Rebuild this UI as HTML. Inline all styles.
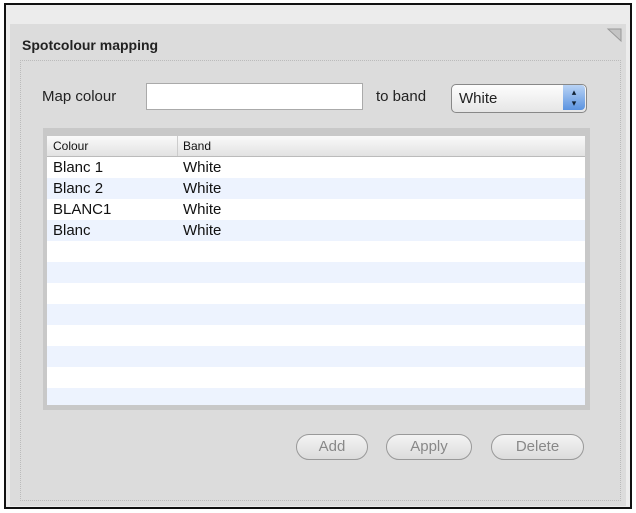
<!DOCTYPE html>
<html><head><style>
body{margin:0;width:636px;height:513px;background:#fff;font-family:"Liberation Sans",sans-serif;position:relative;overflow:hidden}
.a{position:absolute}
#outer{left:4px;top:3px;width:624px;height:502px;border:2px solid #111;background:#ececec}
#panel{left:10px;top:24px;width:616px;height:482px;background:#dcdcdc}
#dot{left:20px;top:60px;width:599px;height:439px;border:1px dotted #bbb}
.t{font-size:15px;color:#222}
.btn{height:24px;border:1px solid #999;border-radius:13px;background:linear-gradient(#f4f4f4,#dcdcdc);color:#888;font-size:15px;text-align:center;line-height:24px}
.row{position:absolute;left:0;width:538px;height:21px;font-size:15px;color:#111;line-height:21px}
</style></head><body>
<div class="a" id="outer"></div>
<div class="a" id="panel"></div>
<svg class="a" style="left:606px;top:26px" width="18" height="18"><path d="M2 3 L15 3 L15 15 Z" fill="#c4c4c4" stroke="#999" stroke-width="1"/></svg>
<div class="a" id="dot"></div>
<div class="a t" style="left:22px;top:37px;font-weight:bold;font-size:14px">Spotcolour mapping</div>
<div class="a t" style="left:42px;top:88px">Map colour</div>
<div class="a" style="left:146px;top:83px;width:215px;height:25px;background:#fff;border:1px solid #aaa"></div>
<div class="a t" style="left:376px;top:88px">to band</div>
<div class="a" style="left:451px;top:84px;width:134px;height:27px;border:1px solid #888;border-radius:5px;background:linear-gradient(#fdfdfd,#e6e6e6)"></div>
<div class="a t" style="left:459px;top:90px">White</div>
<div class="a" style="left:563px;top:85px;width:22px;height:25px;border-radius:0 4px 4px 0;background:linear-gradient(#b9d3f5,#5b93e0);color:#123;font-size:9px;text-align:center;line-height:11px;padding-top:2px;box-sizing:border-box">▴<br>▾</div>
<div class="a" style="left:43px;top:128px;width:547px;height:282px;background:#c8c8c8"></div>
<div class="a" style="left:47px;top:136px;width:538px;height:269px;background:#fff;overflow:hidden">
<div class="row" style="top:0;height:20px;background:linear-gradient(#fafafa,#e2e2e2);border-bottom:1px solid #bbb;font-size:12px;line-height:20px"><span style="position:absolute;left:6px">Colour</span><span style="position:absolute;left:130px;top:0;height:20px;border-left:1px solid #ccc"></span><span style="position:absolute;left:136px">Band</span></div>
<div class="row" style="top:21px"><span style="position:absolute;left:6px">Blanc 1</span><span style="position:absolute;left:136px">White</span></div>
<div class="row" style="top:42px;background:#edf3fe"><span style="position:absolute;left:6px">Blanc 2</span><span style="position:absolute;left:136px">White</span></div>
<div class="row" style="top:63px"><span style="position:absolute;left:6px">BLANC1</span><span style="position:absolute;left:136px">White</span></div>
<div class="row" style="top:84px;background:#edf3fe"><span style="position:absolute;left:6px">Blanc</span><span style="position:absolute;left:136px">White</span></div>
<div class="row" style="top:126px;background:#edf3fe"></div>
<div class="row" style="top:168px;background:#edf3fe"></div>
<div class="row" style="top:210px;background:#edf3fe"></div>
<div class="row" style="top:252px;background:#edf3fe"></div>
</div>
<div class="a btn" style="left:296px;top:434px;width:70px">Add</div>
<div class="a btn" style="left:386px;top:434px;width:84px">Apply</div>
<div class="a btn" style="left:491px;top:434px;width:91px">Delete</div>
</body></html>
